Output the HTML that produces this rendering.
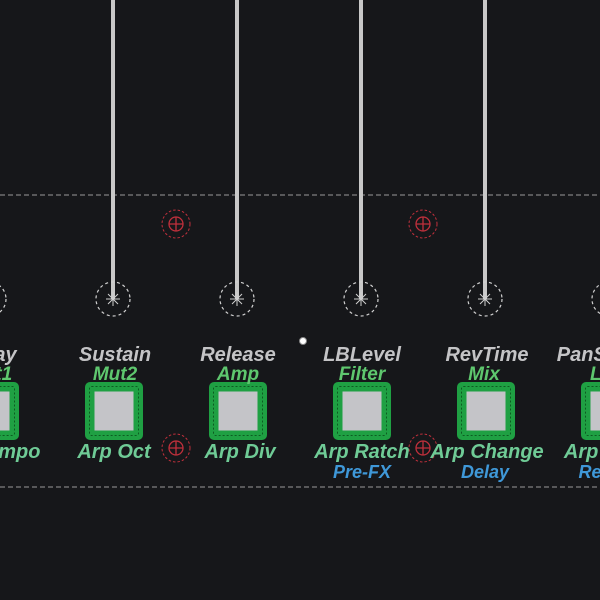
<!DOCTYPE html>
<html><head><style>
html,body{margin:0;padding:0;background:#16171a;width:600px;height:600px;overflow:hidden}
svg{display:block}
text{font-family:"Liberation Sans",sans-serif;font-weight:bold;font-style:italic;text-anchor:middle}
.t{fill:#c4c4c6;font-size:20px}
.g{fill:#5ec76e;font-size:19px}
.m{fill:#6fcb96;font-size:20px}
.b{fill:#3f98d8;font-size:18px}
</style></head><body>
<svg width="600" height="600" viewBox="0 0 600 600" xmlns="http://www.w3.org/2000/svg">
<rect width="600" height="600" fill="#16171a"/>
<line x1="0" y1="195" x2="600" y2="195" stroke="#9a9a9a" stroke-width="1" stroke-dasharray="5,3"/>
<line x1="0" y1="487" x2="600" y2="487" stroke="#9a9a9a" stroke-width="1" stroke-dasharray="5,3"/>
<defs>
<g id="knob">
<circle cx="0" cy="0" r="17" fill="none" stroke="#d0d0d0" stroke-width="1.2" stroke-dasharray="3,3"/>
<path d="M-7 0H7M0-7V7M-5-5L5 5M-5 5L5-5" stroke="#d0d0d0" stroke-width="1"/>
</g>
<g id="red">
<circle r="14" fill="none" stroke="#c0303c" stroke-width="1" stroke-dasharray="2.5,2"/>
<circle r="7" fill="none" stroke="#c0303c" stroke-width="1.3"/>
<path d="M-7 0H7M0-7V7" stroke="#c0303c" stroke-width="1.3"/>
</g>
<g id="btn">
<rect x="-29" y="-29" width="58" height="58" rx="5" fill="#1fa043"/>
<rect x="-24.5" y="-24.5" width="49" height="49" rx="2" fill="none" stroke="#0d5c22" stroke-width="1" stroke-dasharray="2,2"/>
<rect x="-19.5" y="-19.5" width="39" height="39" fill="#c4c4c8"/>
</g>
</defs>
<g fill="#c8c8c8">
<rect x="111" y="0" width="4" height="299"/>
<rect x="235" y="0" width="4" height="299"/>
<rect x="359" y="0" width="4" height="299"/>
<rect x="483" y="0" width="4" height="299"/>
</g>
<use href="#knob" x="-11" y="299"/>
<use href="#knob" x="113" y="299"/>
<use href="#knob" x="237" y="299"/>
<use href="#knob" x="361" y="299"/>
<use href="#knob" x="485" y="299"/>
<use href="#knob" x="609" y="299"/>
<use href="#red" x="176" y="224"/>
<use href="#red" x="423" y="224"/>
<use href="#red" x="176" y="448"/>
<use href="#red" x="423" y="448"/>
<circle cx="303" cy="341" r="3.5" fill="#fff" stroke="#888" stroke-width="1"/>
<use href="#btn" x="-10" y="411"/>
<use href="#btn" x="114" y="411"/>
<use href="#btn" x="238" y="411"/>
<use href="#btn" x="362" y="411"/>
<use href="#btn" x="486" y="411"/>
<use href="#btn" x="610" y="411"/>

<text class="t" x="-10" y="361">Delay</text>
<text class="g" x="-10" y="380">Mut1</text>
<text class="m" x="-12" y="458">Arp Tempo</text>

<text class="t" x="115" y="361">Sustain</text>
<text class="g" x="115" y="380">Mut2</text>
<text class="m" x="114" y="458">Arp Oct</text>

<text class="t" x="238" y="361">Release</text>
<text class="g" x="238" y="380">Amp</text>
<text class="m" x="240" y="458">Arp Div</text>

<text class="t" x="362" y="361">LBLevel</text>
<text class="g" x="362" y="380">Filter</text>
<text class="m" x="362" y="458">Arp Ratch</text>
<text class="b" x="362" y="478">Pre-FX</text>

<text class="t" x="487" y="361">RevTime</text>
<text class="g" x="484" y="380">Mix</text>
<text class="m" x="487" y="458">Arp Change</text>
<text class="b" x="485" y="478">Delay</text>

<text class="t" x="609" y="361">PanSpread</text>
<text class="g" x="609" y="380">LFO</text>
<text class="m" x="610" y="458">Arp Mode</text>
<text class="b" x="609" y="478">Reverb</text>
</svg>
</body></html>
